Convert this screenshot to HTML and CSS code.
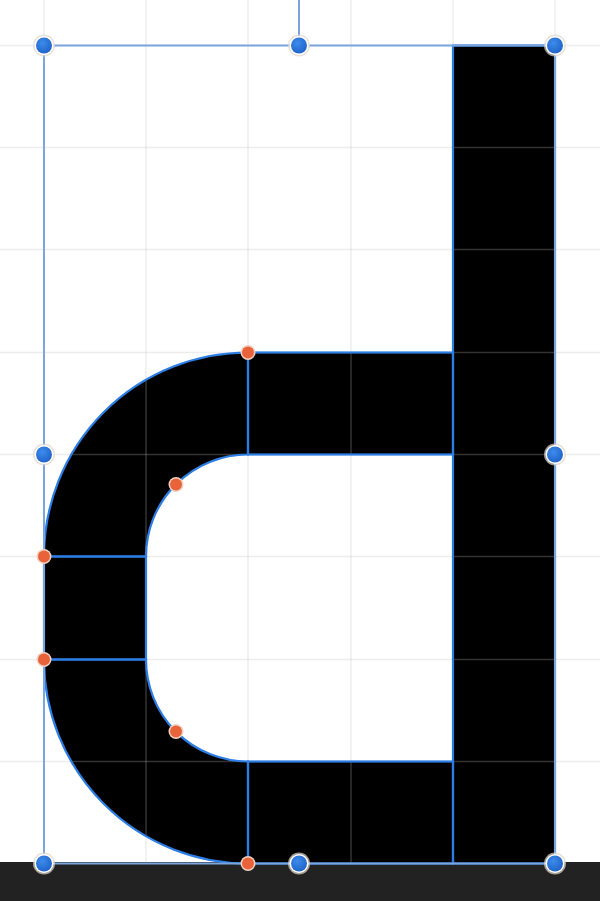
FILE: index.html
```html
<!DOCTYPE html>
<html>
<head>
<meta charset="utf-8">
<link rel="stylesheet" href="styles.css">
</head>
<body>
<div class="app">
  <div class="canvas">
    <svg class="stage" width="600" height="862" viewBox="0 0 600 862">
      <defs>
        <radialGradient id="hg" cx="40%" cy="35%" r="70%">
          <stop offset="0" stop-color="#3d8cec"/>
          <stop offset="1" stop-color="#1f62c8"/>
        </radialGradient>
      </defs>
      <g transform="translate(0 0.5)">
      <!-- glyph shapes -->
      <g class="shape">
        <rect x="453" y="45" width="102" height="818"/>
        <rect x="248" y="352" width="205" height="102"/>
        <rect x="248" y="761" width="205" height="102"/>
        <rect x="44" y="556" width="102" height="103"/>
        <path d="M44 556 A204 204 0 0 1 248 352 L248 454 A102 102 0 0 0 146 556 Z"/>
        <path d="M44 659 L146 659 A102 102 0 0 0 248 761 L248 863 A204 204 0 0 1 44 659 Z"/>
      </g>
      <!-- grid -->
      <g class="grid">
        <line x1="44" y1="-1" x2="44" y2="862"/>
        <line x1="146" y1="-1" x2="146" y2="862"/>
        <line x1="248" y1="-1" x2="248" y2="862"/>
        <line x1="351" y1="-1" x2="351" y2="862"/>
        <line x1="453" y1="-1" x2="453" y2="862"/>
        <line x1="555" y1="-1" x2="555" y2="862"/>
        <line x1="0" y1="45" x2="600" y2="45"/>
        <line x1="0" y1="147" x2="600" y2="147"/>
        <line x1="0" y1="249" x2="600" y2="249"/>
        <line x1="0" y1="352" x2="600" y2="352"/>
        <line x1="0" y1="454" x2="600" y2="454"/>
        <line x1="0" y1="556" x2="600" y2="556"/>
        <line x1="0" y1="659" x2="600" y2="659"/>
        <line x1="0" y1="761" x2="600" y2="761"/>
      </g>
      <!-- shape outlines -->
      <g class="outline">
        <rect x="453" y="45" width="102" height="818"/>
        <rect x="248" y="352" width="205" height="102"/>
        <rect x="248" y="761" width="205" height="102"/>
        <rect x="44" y="556" width="102" height="103"/>
        <path d="M44 556 A204 204 0 0 1 248 352 L248 454 A102 102 0 0 0 146 556 Z"/>
        <path d="M44 659 L146 659 A102 102 0 0 0 248 761 L248 863 A204 204 0 0 1 44 659 Z"/>
      </g>
      <!-- selection box -->
      <g class="bbox">
        <rect x="44" y="45" width="511" height="818"/>
        <line x1="299" y1="-1" x2="299" y2="45"/>
      </g>
      <!-- on-curve points -->
      <g class="pt">
        <circle cx="248" cy="352" r="7.5" class="pt-ring"/><circle cx="248" cy="352" r="6" class="pt-dot"/>
        <circle cx="176" cy="484" r="7.5" class="pt-ring"/><circle cx="176" cy="484" r="6" class="pt-dot"/>
        <circle cx="44" cy="556" r="7.5" class="pt-ring"/><circle cx="44" cy="556" r="6" class="pt-dot"/>
        <circle cx="44" cy="659" r="7.5" class="pt-ring"/><circle cx="44" cy="659" r="6" class="pt-dot"/>
        <circle cx="176" cy="731" r="7.5" class="pt-ring"/><circle cx="176" cy="731" r="6" class="pt-dot"/>
        <circle cx="248" cy="863" r="7.5" class="pt-ring"/><circle cx="248" cy="863" r="6" class="pt-dot"/>
      </g>
      <!-- selection handles -->
      <g class="handles">
        <g transform="translate(44 45)"><circle r="11" class="h-halo"/><circle r="9.5" class="h-ring"/><circle r="8" class="h-dot"/></g>
        <g transform="translate(299 45)"><circle r="11" class="h-halo"/><circle r="9.5" class="h-ring"/><circle r="8" class="h-dot"/></g>
        <g transform="translate(555 45)"><circle r="11" class="h-halo"/><circle r="9.5" class="h-ring"/><circle r="8" class="h-dot"/></g>
        <g transform="translate(44 454)"><circle r="11" class="h-halo"/><circle r="9.5" class="h-ring"/><circle r="8" class="h-dot"/></g>
        <g transform="translate(555 454)"><circle r="11" class="h-halo"/><circle r="9.5" class="h-ring"/><circle r="8" class="h-dot"/></g>
        <g transform="translate(44 863)"><circle r="11" class="h-halo"/><circle r="9.5" class="h-ring"/><circle r="8" class="h-dot"/></g>
        <g transform="translate(299 863)"><circle r="11" class="h-halo"/><circle r="9.5" class="h-ring"/><circle r="8" class="h-dot"/></g>
        <g transform="translate(555 863)"><circle r="11" class="h-halo"/><circle r="9.5" class="h-ring"/><circle r="8" class="h-dot"/></g>
      </g>
      </g>
    </svg>
  </div>
  <div class="statusbar"></div>
</div>
</body>
</html>
```

FILE: styles.css
```css
html, body {
  margin: 0;
  padding: 0;
  background: #ffffff;
  font-family: "Liberation Sans", Arial, sans-serif;
}
.app {
  width: 600px;
  height: 901px;
  display: flex;
  flex-direction: column;
  overflow: hidden;
}
.canvas {
  position: relative;
  z-index: 1;
  height: 862px;
  flex: 0 0 862px;
  background: #ffffff;
}
.stage {
  display: block;
  overflow: visible;
}
.statusbar {
  flex: 1 1 auto;
  background: #222222;
}
.shape rect, .shape path {
  fill: #000000;
  stroke: none;
}
.grid line {
  stroke: rgba(190, 190, 190, 0.27);
  stroke-width: 1.5;
}
.outline rect, .outline path {
  fill: none;
  stroke: #2c7de4;
  stroke-width: 2.2;
}
.bbox rect, .bbox line {
  fill: none;
  stroke: #7aa6dd;
  stroke-width: 2;
}
.pt-ring { fill: #f1d2c4; }
.pt-dot { fill: #e8623a; }
.h-halo { fill: rgba(225, 215, 205, 0.7); }
.h-ring { fill: #ffffff; }
.h-dot { fill: url(#hg); }
```
